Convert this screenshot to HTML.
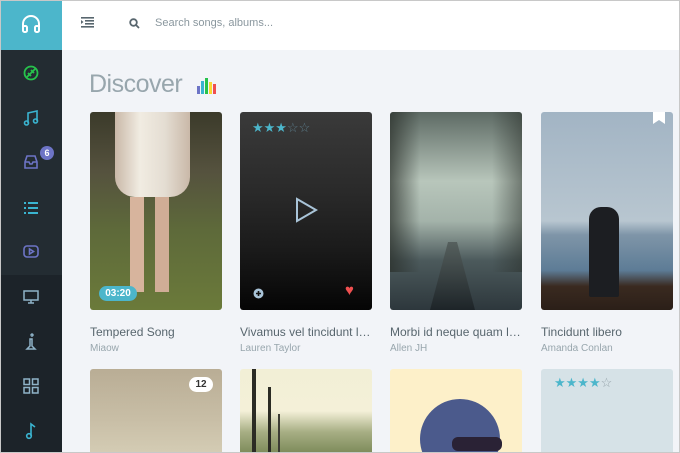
<!DOCTYPE html>
<html style="width:680px;height:453px;overflow:hidden"><head><style>
*{margin:0;padding:0;box-sizing:border-box}
body{width:680px;height:453px;overflow:hidden;background:#f2f4f8;font-family:"Liberation Sans",sans-serif;position:relative}
.frame{position:absolute;left:0;top:0;width:680px;height:453px;border:1px solid #c8c8c8;z-index:50;pointer-events:none}
.side{position:absolute;left:0;top:0;width:62px;height:453px;background:#1c2329}
.side .top{height:50px;background:#4cb6cb}
.side .mid{height:225px;background:#232c32}
.ic{position:absolute;left:0;width:62px;display:flex;justify-content:center}
.head{position:absolute;left:62px;top:0;right:0;height:50px;background:#fff}
.card{position:absolute;width:132px;border-radius:3px;overflow:hidden}
.t{position:absolute;font-size:12px;color:#58666e}
.s{position:absolute;font-size:10px;color:#98a6ad}
.star{color:#4cb6cb;font-size:13px;letter-spacing:0}
</style></head><body>
<div class="frame"></div>
<div class="side"><div class="top"></div><div class="mid"></div></div>
<div class="ic" style="top:13px"><svg width="22" height="22" viewBox="0 0 22 22" fill="none" stroke="#fff" stroke-width="2"><path d="M3 14V11a8 8 0 0 1 16 0v3"/><rect x="3" y="13" width="4" height="6" rx="1.5"/><rect x="15" y="13" width="4" height="6" rx="1.5"/></svg></div>
<div class="ic" style="top:65px"><svg width="16" height="16" viewBox="0 0 16 16" fill="none" stroke="#27c24c" stroke-width="1.8"><circle cx="8" cy="8" r="6.5"/><path d="M4 12L12 4M5 8l3 3M8 5l3 3"/></svg></div>
<div class="ic" style="top:110px"><svg width="16" height="16" viewBox="0 0 16 16" fill="none" stroke="#3ab4d0" stroke-width="1.6"><path d="M5 13V3l9-2v10"/><circle cx="3.5" cy="13" r="2"/><circle cx="12.5" cy="11" r="2"/></svg></div>
<div class="ic" style="top:154px"><svg width="16" height="16" viewBox="0 0 16 16" fill="none" stroke="#6d74c6" stroke-width="1.6"><path d="M2 8l2-6h8l2 6v6H2z M2 8h4l1 2h2l1-2h4"/></svg></div>
<div style="position:absolute;left:40px;top:146px;width:14px;height:14px;border-radius:7px;background:#6d74c6;color:#fff;font-size:9px;font-weight:bold;text-align:center;line-height:14px">6</div>
<div class="ic" style="top:201px"><svg width="16" height="14" viewBox="0 0 16 14" fill="#3ab4d0"><rect x="1" y="1" width="2" height="2"/><rect x="5" y="1" width="10" height="2"/><rect x="1" y="6" width="2" height="2"/><rect x="5" y="6" width="10" height="2"/><rect x="1" y="11" width="2" height="2"/><rect x="5" y="11" width="10" height="2"/></svg></div>
<div class="ic" style="top:245px"><svg width="16" height="14" viewBox="0 0 16 14" fill="none" stroke="#6d74c6" stroke-width="1.6"><rect x="1" y="1" width="14" height="11" rx="3"/><path d="M6.5 4v5l4-2.5z"/></svg></div>
<div class="ic" style="top:289px"><svg width="16" height="16" viewBox="0 0 16 16" fill="none" stroke="#8fb3c8" stroke-width="1.5"><rect x="1" y="2" width="14" height="9"/><path d="M8 11v3M5 14h6"/></svg></div>
<div class="ic" style="top:333px"><svg width="12" height="18" viewBox="0 0 12 18" fill="none" stroke="#8fb3c8" stroke-width="1.5"><path d="M6 2a1 1 0 1 1 0 .1M5 6h2v7l3 3H2l3-3z"/></svg></div>
<div class="ic" style="top:378px"><svg width="16" height="16" viewBox="0 0 16 16" fill="none" stroke="#8fb3c8" stroke-width="1.5"><rect x="1" y="1" width="5.5" height="5.5"/><rect x="9.5" y="1" width="5.5" height="5.5"/><rect x="1" y="9.5" width="5.5" height="5.5"/><rect x="9.5" y="9.5" width="5.5" height="5.5"/></svg></div>
<div class="ic" style="top:422px"><svg width="12" height="18" viewBox="0 0 12 18" fill="none" stroke="#3ab4d0" stroke-width="1.6"><path d="M6 14V2l4 3"/><circle cx="4" cy="14" r="2.3"/></svg></div>

<div class="head">
<svg style="position:absolute;left:19px;top:17px" width="13" height="11" viewBox="0 0 13 11" fill="#58666e"><rect x="0" y="0" width="13" height="1.6"/><rect x="4" y="3" width="9" height="1.6"/><rect x="4" y="6" width="9" height="1.6"/><rect x="0" y="9" width="13" height="1.6"/><path d="M0 3l2.5 2L0 7z"/></svg>
<svg style="position:absolute;left:67px;top:18px" width="11" height="11" viewBox="0 0 11 11" fill="none" stroke="#58666e" stroke-width="1.8"><circle cx="4.5" cy="4.5" r="3.3"/><path d="M7 7l3 3"/></svg>
<div style="position:absolute;left:93px;top:17px;font-size:11px;color:#8a979e">Search songs, albums...</div>
</div>

<div style="position:absolute;left:89px;top:70px;font-size:25px;color:#98a6ad;letter-spacing:-0.5px">Discover</div>
<svg style="position:absolute;left:196px;top:77px" width="20" height="17"><rect x="1" y="9" width="3" height="8" fill="#6d74c6"/><rect x="5" y="4" width="3" height="13" fill="#3ab4d0"/><rect x="9" y="1" width="3" height="16" fill="#27c24c"/><rect x="13" y="5" width="3" height="12" fill="#fad733"/><rect x="17" y="7" width="3" height="10" fill="#f05050"/></svg>

<div class="card" style="left:90px;top:112px;height:198px;background:linear-gradient(180deg,#3b3a2a 0%,#55523e 30%,#5e6a3a 60%,#6b7a3a 100%)">
<div style="position:absolute;left:25px;top:0;width:75px;height:85px;background:linear-gradient(90deg,#c9b8a8,#f1ece2,#e4ddd2,#c9b8a8);border-radius:0 0 20px 20px"></div>
<div style="position:absolute;left:40px;top:85px;width:14px;height:95px;background:#d7b49d"></div>
<div style="position:absolute;left:65px;top:85px;width:14px;height:95px;background:#d0ad96"></div>
<div style="position:absolute;left:9px;top:174px;width:38px;height:15px;border-radius:8px;background:#4cb6cb;color:#fff;font-size:10px;font-weight:bold;text-align:center;line-height:15px">03:20</div></div>
<div class="card" style="left:240px;top:112px;height:198px;background:linear-gradient(180deg,#3a3a3a 0%,#2a2a2a 40%,#1a1a1a 70%,#050505 100%)">
<div class="star" style="position:absolute;left:12px;top:8px">★★★<span style="color:#5a7a88">☆☆</span></div>
<svg style="position:absolute;left:54px;top:85px" width="24" height="26" fill="none" stroke="#a9c4d8" stroke-width="2"><path d="M3 2v22l19-11z"/></svg>
<svg style="position:absolute;left:13px;top:176px" width="11" height="11"><circle cx="5.5" cy="5.5" r="5" fill="#a9c4d8"/><path d="M5.5 3v5M3 5.5h5" stroke="#111" stroke-width="1.6"/></svg>
<div style="position:absolute;left:105px;top:170px;color:#f05050;font-size:15px">♥</div></div>
<div class="card" style="left:390px;top:112px;height:198px;background:linear-gradient(180deg,#5d6a64 0%,#b8c6bb 35%,#a4b3aa 55%,#4c5a5c 75%,#2d373c 100%)">
<div style="position:absolute;left:0;top:0;width:30px;height:160px;background:linear-gradient(90deg,rgba(40,45,40,.7),rgba(40,45,40,0))"></div>
<div style="position:absolute;right:0;top:0;width:30px;height:160px;background:linear-gradient(270deg,rgba(40,45,40,.5),rgba(40,45,40,0))"></div>
<div style="position:absolute;left:40px;top:130px;width:45px;height:68px;background:linear-gradient(180deg,#56605e,#1d2428);clip-path:polygon(40% 0,60% 0,100% 100%,0 100%)"></div></div>
<div class="card" style="left:541px;top:112px;height:198px;background:linear-gradient(180deg,#a2b4c4 0%,#b8c6d0 55%,#7f95a8 62%,#5d7c96 80%,#3a2a20 88%,#2b1f18 100%)">
<div style="position:absolute;left:48px;top:95px;width:30px;height:90px;background:#1c1e22;border-radius:12px 12px 2px 2px"></div>
<svg style="position:absolute;left:112px;top:0" width="12" height="12"><path d="M0 0h12v12l-6-4-6 4z" fill="#fff"/></svg></div>

<div class="t" style="left:90px;top:325px">Tempered Song</div><div class="s" style="left:90px;top:343px">Miaow</div>
<div class="t" style="left:240px;top:325px">Vivamus vel tincidunt l…</div><div class="s" style="left:240px;top:343px">Lauren Taylor</div>
<div class="t" style="left:390px;top:325px">Morbi id neque quam l…</div><div class="s" style="left:390px;top:343px">Allen JH</div>
<div class="t" style="left:541px;top:325px">Tincidunt libero</div><div class="s" style="left:541px;top:343px">Amanda Conlan</div>

<div class="card" style="left:90px;top:369px;height:84px;border-radius:3px 3px 0 0;background:linear-gradient(180deg,#b9ad95,#c8bea6 60%,#d4ccb4)">
<div style="position:absolute;right:9px;top:8px;width:24px;height:15px;border-radius:8px;background:#fff;color:#333;font-size:10px;font-weight:bold;text-align:center;line-height:15px">12</div></div>
<div class="card" style="left:240px;top:369px;height:84px;border-radius:3px 3px 0 0;background:linear-gradient(180deg,#f2efd6 0%,#f4f0d8 50%,#a7ae84 75%,#7d8b5a 100%)">
<div style="position:absolute;left:12px;top:0;width:4px;height:90px;background:#2b2b24"></div><div style="position:absolute;left:28px;top:18px;width:3px;height:80px;background:#2b2b24"></div><div style="position:absolute;left:38px;top:45px;width:2px;height:50px;background:#3b3b34"></div></div>
<div class="card" style="left:390px;top:369px;height:84px;border-radius:3px 3px 0 0;background:#fdf0c9">
<div style="position:absolute;left:30px;top:30px;width:80px;height:80px;border-radius:40px;background:#4b5a8c"></div>
<div style="position:absolute;left:62px;top:68px;width:50px;height:14px;border-radius:6px;background:#2a2235"></div></div>
<div class="card" style="left:541px;top:369px;height:84px;border-radius:3px 3px 0 0;background:#d6e2e7">
<div class="star" style="position:absolute;left:13px;top:6px">★★★★<span style="color:#98a6ad">☆</span></div></div>
</body></html>
